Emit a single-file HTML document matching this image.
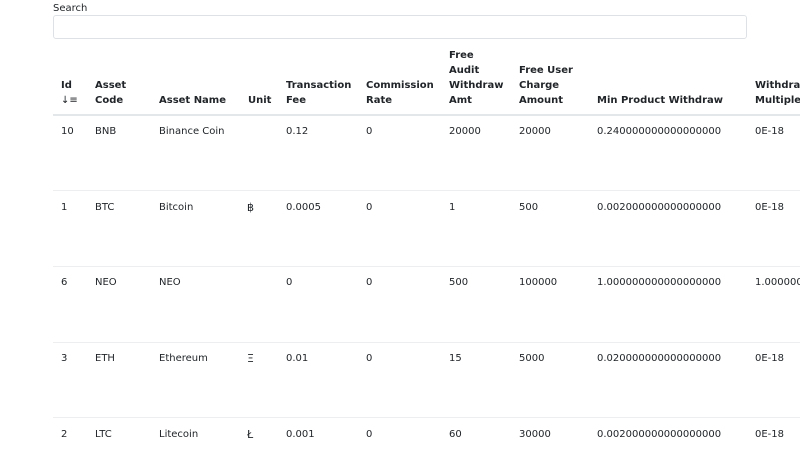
<!DOCTYPE html>
<html><head><meta charset="utf-8"><style>
body{margin:0;width:800px;height:450px;overflow:hidden;background:#fff;font-family:"DejaVu Sans","Liberation Sans",sans-serif;font-size:10px;color:#212529;position:relative}
.a{position:absolute;white-space:nowrap;line-height:15px;margin-top:1px}
.h{font-weight:bold}
.l{position:absolute;left:53px;width:760px;height:1px;background:#eceef0}
</style></head><body>
<div class="a" style="left:53px;top:0px">Search</div>
<div style="position:absolute;left:53px;top:15px;width:692px;height:22px;border:1px solid #dee2e6;border-radius:3px"></div>
<div class="l" style="top:114px;height:2px;background:#e4e7ea"></div>
<div class="l" style="top:190px"></div>
<div class="l" style="top:266px"></div>
<div class="l" style="top:342px"></div>
<div class="l" style="top:417px"></div>
<div class="a h" style="left:61px;top:77px">Id<br><span style="font-weight:normal;font-size:10px">↓≡</span></div>
<div class="a h" style="left:95px;top:77px">Asset<br>Code</div>
<div class="a h" style="left:159px;top:92px">Asset Name</div>
<div class="a h" style="left:248px;top:92px">Unit</div>
<div class="a h" style="left:286px;top:77px">Transaction<br>Fee</div>
<div class="a h" style="left:366px;top:77px">Commission<br>Rate</div>
<div class="a h" style="left:449px;top:47px">Free<br>Audit<br>Withdraw<br>Amt</div>
<div class="a h" style="left:519px;top:62px">Free User<br>Charge<br>Amount</div>
<div class="a h" style="left:597px;top:92px">Min Product Withdraw</div>
<div class="a h" style="left:755px;top:77px">Withdraw<br>Multiple</div>

<div class="a" style="left:61px;top:123px">10</div><div class="a" style="left:95px;top:123px">BNB</div><div class="a" style="left:159px;top:123px">Binance Coin</div><div class="a" style="left:286px;top:123px">0.12</div><div class="a" style="left:366px;top:123px">0</div><div class="a" style="left:449px;top:123px">20000</div><div class="a" style="left:519px;top:123px">20000</div><div class="a" style="left:597px;top:123px">0.240000000000000000</div><div class="a" style="left:755px;top:123px">0E-18</div>

<div class="a" style="left:61px;top:199px">1</div><div class="a" style="left:95px;top:199px">BTC</div><div class="a" style="left:159px;top:199px">Bitcoin</div><div class="a" style="left:247px;top:199px;font-size:11px">฿</div><div class="a" style="left:286px;top:199px">0.0005</div><div class="a" style="left:366px;top:199px">0</div><div class="a" style="left:449px;top:199px">1</div><div class="a" style="left:519px;top:199px">500</div><div class="a" style="left:597px;top:199px">0.002000000000000000</div><div class="a" style="left:755px;top:199px">0E-18</div>

<div class="a" style="left:61px;top:274px">6</div><div class="a" style="left:95px;top:274px">NEO</div><div class="a" style="left:159px;top:274px">NEO</div><div class="a" style="left:286px;top:274px">0</div><div class="a" style="left:366px;top:274px">0</div><div class="a" style="left:449px;top:274px">500</div><div class="a" style="left:519px;top:274px">100000</div><div class="a" style="left:597px;top:274px">1.000000000000000000</div><div class="a" style="left:755px;top:274px">1.000000</div>

<div class="a" style="left:61px;top:350px">3</div><div class="a" style="left:95px;top:350px">ETH</div><div class="a" style="left:159px;top:350px">Ethereum</div><div class="a" style="left:247px;top:350px;font-size:11px">Ξ</div><div class="a" style="left:286px;top:350px">0.01</div><div class="a" style="left:366px;top:350px">0</div><div class="a" style="left:449px;top:350px">15</div><div class="a" style="left:519px;top:350px">5000</div><div class="a" style="left:597px;top:350px">0.020000000000000000</div><div class="a" style="left:755px;top:350px">0E-18</div>

<div class="a" style="left:61px;top:426px">2</div><div class="a" style="left:95px;top:426px">LTC</div><div class="a" style="left:159px;top:426px">Litecoin</div><div class="a" style="left:247px;top:426px;font-size:11px">Ł</div><div class="a" style="left:286px;top:426px">0.001</div><div class="a" style="left:366px;top:426px">0</div><div class="a" style="left:449px;top:426px">60</div><div class="a" style="left:519px;top:426px">30000</div><div class="a" style="left:597px;top:426px">0.002000000000000000</div><div class="a" style="left:755px;top:426px">0E-18</div>
</body></html>
